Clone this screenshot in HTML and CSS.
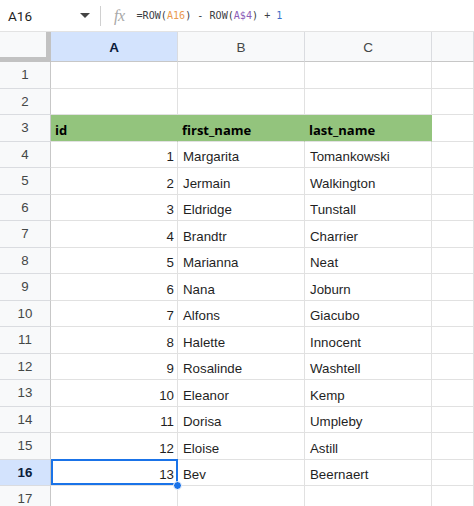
FILE: index.html
```html
<!DOCTYPE html>
<html>
<head>
<meta charset="utf-8">
<link rel="stylesheet" href="styles.css">
</head>
<body>
<div class="formula-bar">
  <div class="namebox">A16</div>
  <svg class="caret" width="10" height="6" viewBox="0 0 10 6"><path d="M0 0h10L5 5z" fill="#444"/></svg>
  <div class="divider"></div>
  <div class="fx">fx</div>
  <div class="formula">=ROW(<span class="ref1">A16</span>) - ROW(<span class="ref2">A$4</span>) + <span class="num">1</span></div>
</div>
<div class="sheet">
  <div class="corner"></div>
  <div class="colh active">A</div>
  <div class="colh">B</div>
  <div class="colh">C</div>
  <div class="colh"></div>

  <div class="rowh">1</div><div class="c"></div><div class="c"></div><div class="c"></div><div class="c"></div>
  <div class="rowh">2</div><div class="c"></div><div class="c"></div><div class="c"></div><div class="c"></div>
  <div class="rowh">3</div><div class="c hd">id</div><div class="c hd">first_name</div><div class="c hd">last_name</div><div class="c"></div>
  <div class="rowh">4</div><div class="c n">1</div><div class="c">Margarita</div><div class="c">Tomankowski</div><div class="c"></div>
  <div class="rowh">5</div><div class="c n">2</div><div class="c">Jermain</div><div class="c">Walkington</div><div class="c"></div>
  <div class="rowh">6</div><div class="c n">3</div><div class="c">Eldridge</div><div class="c">Tunstall</div><div class="c"></div>
  <div class="rowh">7</div><div class="c n">4</div><div class="c">Brandtr</div><div class="c">Charrier</div><div class="c"></div>
  <div class="rowh">8</div><div class="c n">5</div><div class="c">Marianna</div><div class="c">Neat</div><div class="c"></div>
  <div class="rowh">9</div><div class="c n">6</div><div class="c">Nana</div><div class="c">Joburn</div><div class="c"></div>
  <div class="rowh">10</div><div class="c n">7</div><div class="c">Alfons</div><div class="c">Giacubo</div><div class="c"></div>
  <div class="rowh">11</div><div class="c n">8</div><div class="c">Halette</div><div class="c">Innocent</div><div class="c"></div>
  <div class="rowh">12</div><div class="c n">9</div><div class="c">Rosalinde</div><div class="c">Washtell</div><div class="c"></div>
  <div class="rowh">13</div><div class="c n">10</div><div class="c">Eleanor</div><div class="c">Kemp</div><div class="c"></div>
  <div class="rowh">14</div><div class="c n">11</div><div class="c">Dorisa</div><div class="c">Umpleby</div><div class="c"></div>
  <div class="rowh">15</div><div class="c n">12</div><div class="c">Eloise</div><div class="c">Astill</div><div class="c"></div>
  <div class="rowh active">16</div><div class="c n sel">13<span class="handle"></span></div><div class="c">Bev</div><div class="c">Beernaert</div><div class="c"></div>
  <div class="rowh">17</div><div class="c"></div><div class="c"></div><div class="c"></div><div class="c"></div>
</div>
</body>
</html>
```
FILE: styles.css
```css
* { box-sizing: border-box; }
html, body {
  margin: 0;
  padding: 0;
  width: 474px;
  height: 506px;
  overflow: hidden;
  background: #fff;
  font-family: "Liberation Sans", Arial, sans-serif;
}
.formula-bar {
  height: 32px;
  border-bottom: 1px solid #e3e3e3;
  display: flex;
  align-items: center;
  background: #fff;
}
.namebox {
  width: 78px;
  padding-left: 8px;
  font-size: 13.5px;
  color: #1f1f1f;
  font-family: Roboto, "Liberation Sans", sans-serif;
}
.caret { margin-left: 2px; margin-top: 1px; }
.divider {
  width: 1px;
  height: 20px;
  background: #d0d0d0;
  margin-left: 10px;
}
.fx {
  margin-left: 13px;
  font-family: "Liberation Serif", serif;
  font-style: italic;
  font-size: 16px;
  color: #a8a8a8;
  letter-spacing: -0.5px;
}
.formula {
  margin-left: 12px;
  font-family: "DejaVu Sans Mono", "Liberation Mono", monospace;
  font-size: 10.1px;
  color: #3c4043;
  white-space: pre;
}
.ref1 { color: #eb9a4f; }
.ref2 { color: #8c5cb8; }
.num { color: #3d6fc9; }

.sheet {
  display: grid;
  grid-template-columns: 51px 127px 127px 127px 1fr;
  grid-template-rows: 30px;
  grid-auto-rows: 26.5px;
}
.corner {
  background: #f8f9fa;
  border-right: 5px solid #c2c2c2;
  border-bottom: 5px solid #c2c2c2;
}
.colh {
  background: #f8f9fa;
  border-right: 1px solid #dadce0;
  border-bottom: 1px solid #c7c7c7;
  display: flex;
  align-items: center;
  justify-content: center;
  font-size: 13.5px;
  color: #444746;
  padding-top: 1px;
}
.colh.active {
  background: #d3e3fd;
  color: #0b1c3a;
  font-weight: bold;
}
.rowh {
  background: #f8f9fa;
  border-right: 1px solid #c7c7c7;
  border-bottom: 1px solid #dadce0;
  display: flex;
  align-items: center;
  justify-content: center;
  font-size: 13.3px;
  color: #444746;
}
.rowh.active {
  background: #d3e3fd;
  color: #0b1c3a;
  font-weight: bold;
}
.c {
  border-right: 1px solid #e1e1e1;
  border-bottom: 1px solid #e1e1e1;
  display: flex;
  align-items: flex-end;
  padding: 0 4px 3px 5px;
  font-size: 13.3px;
  color: #1f1f1f;
  white-space: nowrap;
  overflow: visible;
}
.c.n { justify-content: flex-end; padding-right: 3px; }
.c.hd {
  background: #93c47d;
  font-family: "Open Sans", "Noto Sans", sans-serif;
  font-weight: bold;
  font-size: 13px;
  color: #000;
  padding-left: 4px;
  padding-bottom: 2px;
  border-right-color: #93c47d;
  border-bottom-color: #e1e1e1;
}
.c.sel { position: relative; }
.c.sel::after {
  content: "";
  position: absolute;
  top: -1px;
  left: 0;
  right: -1px;
  bottom: 0;
  border: 2px solid #1a73e8;
}
.handle {
  position: absolute;
  right: -5px;
  bottom: -5px;
  width: 9px;
  height: 9px;
  border-radius: 50%;
  background: #1a73e8;
  border: 1px solid #fff;
  z-index: 2;
}
```
